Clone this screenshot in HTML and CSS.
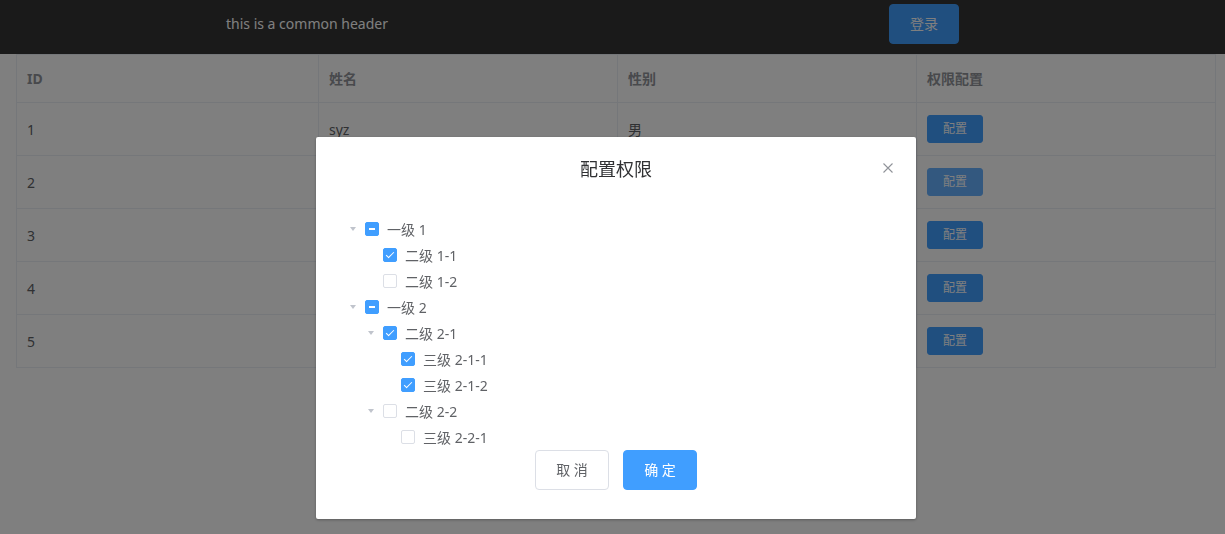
FILE: index.html
```html
<!DOCTYPE html>
<html lang="zh">
<head>
<meta charset="utf-8">
<title>权限配置</title>
<link rel="stylesheet" href="styles.css">
</head>
<body>
<header class="top">
  <span class="top-title">this is a common header</span>
  <button class="btn btn-primary">登录</button>
</header>

<main class="content">
  <table class="grid">
    <colgroup><col class="c1"><col class="c2"><col class="c2"><col class="c2"></colgroup>
    <thead>
      <tr><th>ID</th><th>姓名</th><th>性别</th><th>权限配置</th></tr>
    </thead>
    <tbody>
      <tr><td>1</td><td>syz</td><td>男</td><td><button class="btn btn-primary btn-mini">配置</button></td></tr>
      <tr><td>2</td><td></td><td></td><td><button class="btn btn-primary btn-mini is-hover">配置</button></td></tr>
      <tr><td>3</td><td></td><td></td><td><button class="btn btn-primary btn-mini">配置</button></td></tr>
      <tr><td>4</td><td></td><td></td><td><button class="btn btn-primary btn-mini">配置</button></td></tr>
      <tr><td>5</td><td></td><td></td><td><button class="btn btn-primary btn-mini">配置</button></td></tr>
    </tbody>
  </table>
</main>

<div class="mask"></div>

<div class="dialog-wrap">
  <div class="dialog">
    <div class="dialog-header">
      <span class="dialog-title">配置权限</span>
      <button class="dialog-close" aria-label="关闭">
        <svg width="10" height="10" viewBox="0 0 10 10"><path d="M0.5 0.5L9.5 9.5M9.5 0.5L0.5 9.5" stroke="#909399" stroke-width="1.1" fill="none"/></svg>
      </button>
    </div>
    <div class="dialog-body">
      <ul class="tree">
        <li class="node lv1"><span class="caret"></span><span class="cb indeterminate"></span><span class="label">一级 1</span></li>
        <li class="node lv2"><span class="caret leaf"></span><span class="cb checked"></span><span class="label">二级 1-1</span></li>
        <li class="node lv2"><span class="caret leaf"></span><span class="cb"></span><span class="label">二级 1-2</span></li>
        <li class="node lv1"><span class="caret"></span><span class="cb indeterminate"></span><span class="label">一级 2</span></li>
        <li class="node lv2"><span class="caret"></span><span class="cb checked"></span><span class="label">二级 2-1</span></li>
        <li class="node lv3"><span class="caret leaf"></span><span class="cb checked"></span><span class="label">三级 2-1-1</span></li>
        <li class="node lv3"><span class="caret leaf"></span><span class="cb checked"></span><span class="label">三级 2-1-2</span></li>
        <li class="node lv2"><span class="caret"></span><span class="cb"></span><span class="label">二级 2-2</span></li>
        <li class="node lv3"><span class="caret leaf"></span><span class="cb"></span><span class="label">三级 2-2-1</span></li>
      </ul>
    </div>
    <div class="dialog-footer">
      <button class="btn btn-default">取 消</button>
      <button class="btn btn-primary">确 定</button>
    </div>
  </div>
</div>
</body>
</html>
```
FILE: styles.css
```css
* { box-sizing: border-box; }

html, body {
  margin: 0;
  padding: 0;
  background: #fff;
  font-family: "Noto Sans", "Noto Sans CJK SC", sans-serif;
  font-size: 14px;
  color: #606266;
}

.top {
  height: 54px;
  background: #343434;
  display: flex;
  align-items: flex-start;
  justify-content: space-between;
  padding: 4px 266px 0 226px;
}

.top-title {
  color: #ffffff;
  font-size: 14px;
  line-height: 40px;
}

.btn {
  font-family: inherit;
  font-size: 14px;
  line-height: 1;
  height: 40px;
  padding: 0 20px;
  border-radius: 4px;
  border: 1px solid #dcdfe6;
  background: #fff;
  color: #606266;
  cursor: pointer;
  white-space: nowrap;
}

.btn-primary {
  background: #409eff;
  border-color: #409eff;
  color: #fff;
}

.btn-mini {
  height: 28px;
  width: 56px;
  padding: 0;
  font-size: 12px;
  border-radius: 3px;
}

.btn-mini.is-hover {
  background: #66b1ff;
  border-color: #66b1ff;
}

.content {
  padding: 0 10px 0 16px;
}

.grid {
  width: 1199px;
  border-collapse: collapse;
  table-layout: fixed;
  border: 1px solid #ebeef5;
}

.grid .c1 { width: 302px; }
.grid .c2 { width: 299px; }

.grid th,
.grid td {
  border: 1px solid #ebeef5;
  text-align: left;
  padding: 0 10px;
  line-height: 23px;
}

.grid th {
  height: 48px;
  color: #909399;
  font-weight: bold;
}

.grid td {
  height: 53px;
  color: #606266;
}

.grid td .btn-mini { vertical-align: middle; }

.mask {
  position: fixed;
  inset: 0;
  background: rgba(0, 0, 0, 0.5);
}

.dialog-wrap {
  position: fixed;
  inset: 0;
  overflow: hidden;
}

.dialog {
  position: relative;
  width: 600px;
  margin: 137px 0 0 316px;
  background: #fff;
  border-radius: 2px;
  box-shadow: 0 1px 3px rgba(0, 0, 0, 0.3);
}

.dialog-header {
  padding: 20px 20px 10px;
  text-align: center;
}

.dialog-title {
  display: block;
  font-size: 18px;
  line-height: 24px;
  color: #303133;
}

.dialog-close {
  position: absolute;
  top: 26px;
  right: 23px;
  width: 10px;
  height: 10px;
  padding: 0;
  border: 0;
  background: transparent;
  display: flex;
}

.dialog-body {
  padding: 25px 25px 0;
}

.tree {
  list-style: none;
  margin: 0;
  padding: 0;
}

.node {
  height: 26px;
  display: flex;
  align-items: center;
}

.lv2 { padding-left: 18px; }
.lv3 { padding-left: 36px; }

.caret {
  width: 24px;
  height: 26px;
  display: flex;
  align-items: center;
  justify-content: center;
  flex: none;
}

.caret::before {
  content: "";
  border-left: 3.5px solid transparent;
  border-right: 3.5px solid transparent;
  border-top: 4px solid #c0c4cc;
}

.caret.leaf::before { border-top-color: transparent; }

.cb {
  width: 14px;
  height: 14px;
  flex: none;
  border: 1px solid #dcdfe6;
  border-radius: 2px;
  background: #fff;
  margin-right: 8px;
  position: relative;
}

.cb.checked,
.cb.indeterminate {
  background: #409eff;
  border-color: #409eff;
}

.cb.checked::after {
  content: "";
  position: absolute;
  left: 4px;
  top: 1px;
  width: 3px;
  height: 7px;
  border: 1px solid #fff;
  border-left: 0;
  border-top: 0;
  transform: rotate(45deg);
}

.cb.indeterminate::after {
  content: "";
  position: absolute;
  left: 3px;
  right: 3px;
  top: 5px;
  height: 2px;
  background: #fff;
}

.label {
  font-size: 14px;
  line-height: 24px;
  padding-top: 2px;
  color: #606266;
}

.dialog-footer {
  padding: 0 20px 29px;
  display: flex;
  justify-content: center;
  gap: 14px;
}

.dialog-footer .btn { width: 74px; padding: 0; }
```
